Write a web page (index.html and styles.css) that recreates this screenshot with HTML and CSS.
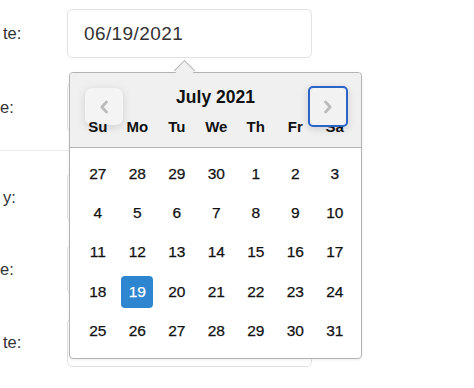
FILE: index.html
```html
<!DOCTYPE html>
<html>
<head>
<meta charset="utf-8">
<link rel="stylesheet" href="styles.css">
</head>
<body>
<div class="form">
  <div class="row r1">
    <div class="label ind">te:</div>
    <div class="input">06/19/2021</div>
  </div>
  <div class="row r2">
    <div class="label">e:</div>
    <div class="input"></div>
  </div>
  <div class="sep"></div>
  <div class="row r3">
    <div class="label ind">y:</div>
    <div class="input"></div>
  </div>
  <div class="row r4">
    <div class="label">e:</div>
    <div class="input"></div>
  </div>
  <div class="row r5">
    <div class="label ind">te:</div>
    <div class="input"></div>
  </div>
</div>

<div class="picker">
  <div class="notch"></div>
  <div class="head">
    <div class="title">July 2021</div>
    <div class="dow">
      <span>Su</span><span>Mo</span><span>Tu</span><span>We</span><span>Th</span><span>Fr</span><span>Sa</span>
    </div>
    <button class="nav prev"><svg width="10" height="14" viewBox="0 0 10 14"><path d="M7.5 2 L2.8 7 L7.5 12" fill="none" stroke="#bcbcbc" stroke-width="2.8" stroke-linecap="round" stroke-linejoin="round"/></svg></button>
    <button class="nav next"><svg width="10" height="14" viewBox="0 0 10 14"><path d="M2.5 2 L7.2 7 L2.5 12" fill="none" stroke="#bcbcbc" stroke-width="2.8" stroke-linecap="round" stroke-linejoin="round"/></svg></button>
  </div>
  <div class="days">
    <span>27</span><span>28</span><span>29</span><span>30</span><span>1</span><span>2</span><span>3</span>
    <span>4</span><span>5</span><span>6</span><span>7</span><span>8</span><span>9</span><span>10</span>
    <span>11</span><span>12</span><span>13</span><span>14</span><span>15</span><span>16</span><span>17</span>
    <span>18</span><span><b class="sel">19</b></span><span>20</span><span>21</span><span>22</span><span>23</span><span>24</span>
    <span>25</span><span>26</span><span>27</span><span>28</span><span>29</span><span>30</span><span>31</span>
  </div>
</div>
</body>
</html>
```

FILE: styles.css
```css
html, body {
  margin: 0;
  padding: 0;
  background: #fff;
  font-family: "Liberation Sans", Arial, sans-serif;
}

.form {
  padding-top: 9px;
  width: 312px;
}

.row {
  display: grid;
  grid-template-columns: 24px 245px;
  column-gap: 43px;
  align-items: center;
}

.r2 { margin-top: 25px; }
.r3 { margin-top: 22px; }
.r4 { margin-top: 23px; }
.r5 { margin-top: 24px; }

.label {
  white-space: nowrap;
  font-size: 16.5px;
  color: #333;
}

.label.ind {
  padding-left: 3px;
}

.input {
  height: 47px;
  border: 1px solid #e2e2e2;
  border-radius: 5px;
  padding-left: 16px;
  display: flex;
  align-items: center;
  font-size: 19px;
  letter-spacing: 0.4px;
  color: #333;
}

.sep {
  margin-top: 18px;
  height: 1px;
  background: #e9e9e9;
}

.picker {
  position: absolute;
  left: 69px;
  top: 72px;
  width: 291px;
  height: 285px;
  border: 1px solid #b3b3b3;
  border-radius: 4px;
  background: #fff;
  box-shadow: 0 1px 3px rgba(0,0,0,0.08);
}

.notch {
  position: absolute;
  left: 107px;
  top: -10px;
  width: 14px;
  height: 14px;
  background: #f0f0f0;
  border-left: 1px solid #b3b3b3;
  border-top: 1px solid #b3b3b3;
  transform: rotate(45deg);
  z-index: 1;
}

.head {
  position: relative;
  height: 74px;
  background: #f0f0f0;
  border-bottom: 1px solid #b3b3b3;
  border-radius: 4px 4px 0 0;
  z-index: 2;
}

.title {
  padding-top: 14px;
  text-align: center;
  font-size: 17.5px;
  font-weight: bold;
  color: #111;
  line-height: 20px;
}

.dow {
  position: relative;
  z-index: 1;
  display: grid;
  grid-template-columns: repeat(7, 39.5px);
  padding-left: 8px;
  margin-top: 11px;
  font-size: 15px;
  font-weight: bold;
  color: #111;
  line-height: 18px;
}

.dow span {
  text-align: center;
}

.nav {
  position: absolute;
  width: 38px;
  height: 38px;
  padding: 0;
  border: 0;
  border-radius: 7px;
  background: #f4f4f4;
  box-shadow: 0 2px 8px rgba(0,0,0,0.14);
  display: flex;
  align-items: center;
  justify-content: center;
}

.prev {
  left: 15px;
  top: 15px;
  height: 37px;
  z-index: 0;
}

.next {
  left: 238px;
  top: 13px;
  width: 40px;
  height: 41px;
  border: 2px solid #2a63c9;
  border-radius: 5px;
  background: #f2f2f2;
  z-index: 2;
}

.days {
  display: grid;
  grid-template-columns: repeat(7, 39.5px);
  grid-auto-rows: 39.3px;
  padding-left: 8px;
  padding-top: 6px;
  font-size: 15.5px;
  color: #111;
  -webkit-text-stroke: 0.25px #111;
}

.days span {
  display: flex;
  align-items: center;
  justify-content: center;
}

.sel {
  width: 32px;
  height: 32px;
  border-radius: 4px;
  background: #2f86d0;
  color: #fff;
  -webkit-text-stroke: 0.25px #fff;
  font-weight: normal;
  display: flex;
  align-items: center;
  justify-content: center;
}
```
